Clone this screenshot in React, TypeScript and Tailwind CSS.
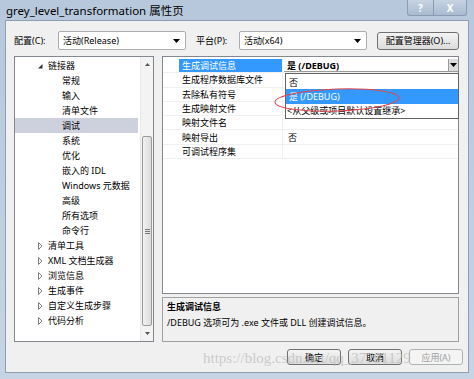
import React from "react";

type TreeItem = { label: string; indent: 0 | 1; arrow?: "open" | "closed"; selected?: boolean };

const treeItems: TreeItem[] = [
  { label: "链接器", indent: 0, arrow: "open" },
  { label: "常规", indent: 1 },
  { label: "输入", indent: 1 },
  { label: "清单文件", indent: 1 },
  { label: "调试", indent: 1, selected: true },
  { label: "系统", indent: 1 },
  { label: "优化", indent: 1 },
  { label: "嵌入的 IDL", indent: 1 },
  { label: "Windows 元数据", indent: 1 },
  { label: "高级", indent: 1 },
  { label: "所有选项", indent: 1 },
  { label: "命令行", indent: 1 },
  { label: "清单工具", indent: 0, arrow: "closed" },
  { label: "XML 文档生成器", indent: 0, arrow: "closed" },
  { label: "浏览信息", indent: 0, arrow: "closed" },
  { label: "生成事件", indent: 0, arrow: "closed" },
  { label: "自定义生成步骤", indent: 0, arrow: "closed" },
  { label: "代码分析", indent: 0, arrow: "closed" },
];

// values of rows 2-4 sit under the open dropdown
const props = [
  { name: "生成调试信息", value: "", selected: true },
  { name: "生成程序数据库文件", value: "" },
  { name: "去除私有符号", value: "" },
  { name: "生成映射文件", value: "" },
  { name: "映射文件名", value: "" },
  { name: "映射导出", value: "否" },
  { name: "可调试程序集", value: "" },
];

const Caret = () => (
  <svg width="7" height="4" viewBox="0 0 7 4" className="shrink-0">
    <path d="M0 0h7L3.5 4z" fill="#000" />
  </svg>
);

const Combo = ({ text, width }: { text: string; width: string }) => (
  <div className={`${width} h-[19px] flex items-center justify-between border border-[#abadb3] bg-white rounded-[2px] pl-[4px] pr-[5px]`}>
    <span>{text}</span>
    <Caret />
  </div>
);

const Button = ({ children, disabled }: { children: React.ReactNode; disabled?: boolean }) => (
  <div
    className={`w-[54px] h-[16px] flex items-center justify-center rounded-[3px] border ${
      disabled
        ? "border-[#adb2b5] bg-[#f4f4f4] text-[#a0a0a0]"
        : "border-[#707070] bg-gradient-to-b from-[#f4f4f4] to-[#dcdcdc] text-black"
    }`}
  >
    {children}
  </div>
);

const Tree = () => (
  <div className="w-[140px] h-[286px] border border-[#828790] bg-white flex">
    <div className="flex-1 pt-[1px]">
      {treeItems.map((it) => (
        <div
          key={it.label}
          className={`h-[15px] flex items-center mr-[2px] ${it.selected ? "bg-[#cdd1de]" : ""} ${
            it.indent === 1 ? "pl-[47px]" : "pl-[22px]"
          }`}
        >
          {it.arrow === "open" && (
            <svg width="11" height="8" viewBox="0 0 11 8" className="shrink-0">
              <path d="M1 6.5L5.5 2v4.5z" fill="#333" />
            </svg>
          )}
          {it.arrow === "closed" && (
            <svg width="11" height="8" viewBox="0 0 11 8" className="shrink-0">
              <path d="M1.5 0.5L5 4L1.5 7.5z" fill="none" stroke="#808080" strokeWidth="1" />
            </svg>
          )}
          <span className="whitespace-nowrap">{it.label}</span>
        </div>
      ))}
    </div>
    <div className="w-[13px] flex flex-col bg-[#f3f3f3] border-l border-[#e8e8e8]">
      <div className="h-[15px] flex items-center justify-center">
        <svg width="5" height="3" viewBox="0 0 5 3">
          <path d="M0 3L2.5 0L5 3z" fill="#555" />
        </svg>
      </div>
      <div className="h-[64px]" />
      <div className="flex-1 mx-[1px] rounded-[2px] border border-[#9a9a9a] bg-gradient-to-r from-[#f2f2f2] to-[#dcdcdc] flex flex-col items-center justify-center gap-[1px]">
        <div className="w-[5px] h-px bg-[#777]" />
        <div className="w-[5px] h-px bg-[#777]" />
        <div className="w-[5px] h-px bg-[#777]" />
      </div>
      <div className="h-[15px] flex items-center justify-center">
        <svg width="5" height="3" viewBox="0 0 5 3">
          <path d="M0 0L2.5 3L5 0z" fill="#555" />
        </svg>
      </div>
    </div>
  </div>
);

const Grid = () => (
  <div className="h-[238px] border border-[#828790] bg-white relative">
    <div className="pt-[2px]">
      {props.map((p) => (
        <div key={p.name} className="h-[14.3px] flex border-b border-[#f0f0f0]">
          <div className="w-[16px]" />
          <div
            className={`w-[104px] pl-[3px] flex items-center whitespace-nowrap border-r border-[#f0f0f0] ${
              p.selected ? "bg-[#3399ff] text-white" : ""
            }`}
          >
            {p.name}
          </div>
          <div className="flex-1 flex items-center">
            {p.selected ? (
              <div className="flex-1 h-full ml-[1px] flex items-center justify-between border-b border-[#9a9a9a] font-bold pl-[3px]">
                <span>是 (/DEBUG)</span>
                <div className="w-[10px] h-full flex items-center justify-center bg-[#dcdcdc] border-l border-[#9a9a9a]">
                  <Caret />
                </div>
              </div>
            ) : (
              <span className="pl-[5px]">{p.value}</span>
            )}
          </div>
        </div>
      ))}
    </div>

    {/* dropdown list */}
    <div className="absolute left-[122px] top-[16px] w-[174px] h-[46px] bg-white border border-[#646464] flex flex-col pt-[1px]">
      <div className="h-[14.5px] flex items-center pl-[3px]">否</div>
      <div className="h-[14.5px] flex items-center pl-[3px] bg-[#3399ff] text-white">是 (/DEBUG)</div>
      <div className="h-[14.5px] flex items-center pl-[1px] whitespace-nowrap">&lt;从父级或项目默认设置继承&gt;</div>
    </div>

    {/* red annotation ellipse */}
    <svg className="absolute left-[109px] top-[29px]" width="130" height="28" viewBox="0 0 130 28">
      <ellipse cx="65" cy="14" rx="62" ry="11" fill="none" stroke="#e0474c" strokeWidth="1" transform="rotate(-2 65 14)" />
    </svg>
  </div>
);

export default function App() {
  return (
    <div className="w-[474px] h-[379px] overflow-hidden relative flex flex-col bg-gradient-to-b from-[#b7c8dc] to-[#c6d4e4] text-[9px] leading-none text-black font-['Segoe_UI','Noto_Sans','Noto_Sans_CJK_SC',sans-serif]">
      {/* title bar */}
      <div className="h-[20px] flex items-start justify-between">
        <div className="pl-[6px] pt-[5px] text-[11.5px] text-black">grey_level_transformation 属性页</div>
        <div className="flex pr-[7px]">
          <div className="w-[26px] h-[16px] flex items-center justify-center text-white font-bold text-[10px] border-b border-l border-[#8a9cb3] rounded-bl-[3px] bg-gradient-to-b from-[#c6d3e2] to-[#a9bbd0]">
            ?
          </div>
          <div className="w-[34px] h-[16px] flex items-center justify-center text-white font-bold text-[10px] border-b border-r border-l border-[#8a9cb3] rounded-br-[3px] bg-gradient-to-b from-[#c6d3e2] to-[#a9bbd0]">
            X
          </div>
        </div>
      </div>

      {/* client area */}
      <div className="flex-1 mx-[5px] mb-[6px] border border-[#8d9db2] bg-[#f0f0f0] flex flex-col pl-[8px] pr-[5px] pt-[10px]">
        <div className="flex items-center h-[19px]">
          <span className="w-[44px]">配置(C):</span>
          <Combo text="活动(Release)" width="w-[128px]" />
          <span className="w-[43px] ml-[10px]">平台(P):</span>
          <Combo text="活动(x64)" width="w-[128px]" />
          <div className="ml-[10px] w-[82px] h-[18px] flex items-center justify-center rounded-[3px] border border-[#707070] bg-gradient-to-b from-[#f4f4f4] to-[#dcdcdc]">
            配置管理器(O)...
          </div>
        </div>

        <div className="flex mt-[6px] gap-[8px]">
          <Tree />
          <div className="w-[297px] flex flex-col">
            <Grid />
            <div className="mt-[3px] h-[45px] border border-[#a0a0a0] bg-[#f0f0f0] pl-[4px] pt-[4px] flex flex-col gap-[7px]">
              <span className="font-bold">生成调试信息</span>
              <span>/DEBUG 选项可为 .exe 文件或 DLL 创建调试信息。</span>
            </div>
          </div>
        </div>

        <div className="flex justify-end gap-[7px] mt-[7px]">
          <Button>确定</Button>
          <Button>取消</Button>
          <Button disabled>应用(A)</Button>
        </div>
      </div>

      {/* watermark */}
      <div className="absolute left-[203px] top-[351px] text-[15px] text-[#b8b8b8]/70 font-['Liberation_Serif',serif] whitespace-nowrap">
        https://blog.csdn.net/qq_37701129
      </div>
    </div>
  );
}
